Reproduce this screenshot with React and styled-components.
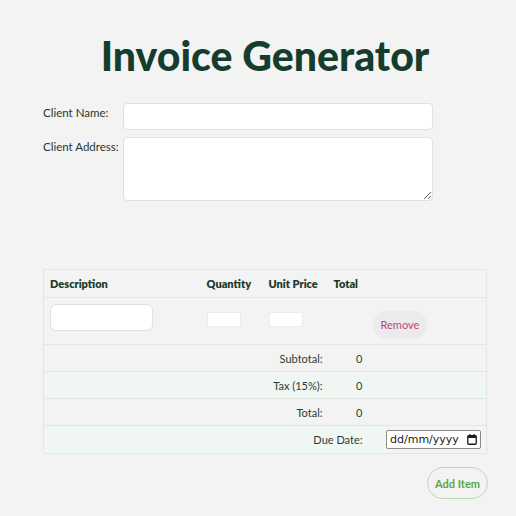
import styled, { createGlobalStyle } from "styled-components";

const GlobalStyle = createGlobalStyle`
  body {
    margin: 0;
    background-color: #f3f3f3;
    font-family: Lato, "Noto Sans", sans-serif;
    color: #24382e;
  }
`;

const Page = styled.div`
  width: 444px;
  margin-left: 43px;
  padding-top: 31px;
`;

const Title = styled.h1`
  margin: 0 0 23px;
  font-size: 41px;
  line-height: 1.2;
  font-weight: 900;
  color: #143d2e;
  text-align: center;
`;

const FormRow = styled.div`
  display: flex;
  align-items: flex-start;
  margin-bottom: 7px;
`;

const Label = styled.label`
  width: 80px;
  flex-shrink: 0;
  padding-top: 3px;
  font-size: 11.5px;
  line-height: 1.2;
  color: #24382e;
`;

const TextInput = styled.input`
  box-sizing: border-box;
  width: 310px;
  height: 27px;
  border: 1px solid #e0e0e0;
  border-radius: 4px;
  background: #fff;
  outline: none;
`;

const TextArea = styled.textarea`
  box-sizing: border-box;
  width: 310px;
  height: 64px;
  border: 1px solid #e0e0e0;
  border-radius: 4px;
  background: #fff;
  outline: none;
  resize: vertical;
`;

const Table = styled.table`
  width: 444px;
  margin-top: 68px;
  border-collapse: collapse;
  table-layout: fixed;
  border: 1px solid #e3e6e3;
`;

const Row = styled.tr`
  border-bottom: 1px solid #e3e6e3;
  background: ${(p) => (p.$tint ? "#f0f6f1" : "transparent")};
`;

const Head = styled.th`
  height: 27px;
  padding: 0 6px;
  font-size: 11px;
  font-weight: 800;
  text-align: left;
  color: #1f3a2d;
`;

const Cell = styled.td`
  height: ${(p) => p.$h || 26}px;
  padding: 0 ${(p) => p.$pr ?? 6}px 0 6px;
  font-size: 11px;
  text-align: ${(p) => p.$align || "left"};
  vertical-align: middle;
  color: #2c3e34;
`;

const DescInput = styled.input`
  display: block;
  box-sizing: border-box;
  width: 103px;
  height: 27px;
  margin-bottom: 7px;
  border: 1px solid #e0e0e0;
  border-radius: 6px;
  background: #fff;
  outline: none;
`;

const SmallInput = styled.input`
  display: block;
  box-sizing: border-box;
  width: 34px;
  height: 15px;
  margin-bottom: 3px;
  border: 1px solid #ececec;
  background: #fff;
  outline: none;
`;

const RemoveButton = styled.button`
  display: block;
  height: 28px;
  margin-top: 7px;
  padding: 0 8px;
  border: none;
  border-radius: 14px;
  background: #ebebeb;
  font-family: inherit;
  font-size: 11px;
  color: #c2457a;
  cursor: pointer;
`;

const DateBox = styled.div`
  display: inline-flex;
  align-items: center;
  justify-content: space-between;
  box-sizing: border-box;
  width: 95px;
  height: 19px;
  padding: 0 3px;
  border: 1px solid #8a8a8a;
  border-radius: 2px;
  background: #fff;
  font-family: "DejaVu Sans", sans-serif;
  font-size: 11px;
  color: #1a1a1a;
  text-align: left;
`;

const Actions = styled.div`
  display: flex;
  justify-content: flex-end;
  margin-top: 13px;
  margin-right: -1px;
`;

const AddButton = styled.button`
  height: 32px;
  padding: 0 7px;
  border: 1px solid #b8dbb0;
  border-radius: 16px;
  background: transparent;
  font-family: inherit;
  font-size: 11px;
  font-weight: 700;
  color: #5aa548;
  cursor: pointer;
`;

function CalendarIcon() {
  return (
    <svg width="10" height="11" viewBox="0 0 10 11">
      <rect x="0.75" y="1.75" width="8.5" height="8.5" rx="1" fill="none" stroke="#1a1a1a" strokeWidth="1.3" />
      <rect x="0.75" y="1.75" width="8.5" height="2.2" fill="#1a1a1a" />
      <rect x="2.4" y="0" width="1.2" height="2.4" fill="#1a1a1a" />
      <rect x="6.4" y="0" width="1.2" height="2.4" fill="#1a1a1a" />
    </svg>
  );
}

function SummaryRow({ label, value, tint }) {
  return (
    <Row $tint={tint}>
      <Cell colSpan={3} $align="right" $pr={5}>
        {label}
      </Cell>
      <Cell $align="right" $pr={4}>
        {value}
      </Cell>
      <Cell />
    </Row>
  );
}

export default function App() {
  return (
    <>
      <GlobalStyle />
      <Page>
        <Title>Invoice Generator</Title>
        <FormRow>
          <Label>Client Name:</Label>
          <TextInput type="text" />
        </FormRow>
        <FormRow>
          <Label>Client Address:</Label>
          <TextArea />
        </FormRow>

        <Table>
          <colgroup>
            <col style={{ width: 157 }} />
            <col style={{ width: 62 }} />
            <col style={{ width: 65 }} />
            <col style={{ width: 39 }} />
            <col />
          </colgroup>
          <thead>
            <Row>
              <Head>Description</Head>
              <Head>Quantity</Head>
              <Head>Unit Price</Head>
              <Head>Total</Head>
              <Head />
            </Row>
          </thead>
          <tbody>
            <Row>
              <Cell $h={46}>
                <DescInput type="text" />
              </Cell>
              <Cell $h={46}>
                <SmallInput type="number" />
              </Cell>
              <Cell $h={46}>
                <SmallInput type="number" />
              </Cell>
              <Cell $h={46} />
              <Cell $h={46}>
                <RemoveButton>Remove</RemoveButton>
              </Cell>
            </Row>
          </tbody>
          <tfoot>
            <SummaryRow label="Subtotal:" value="0" />
            <SummaryRow label="Tax (15%):" value="0" tint />
            <SummaryRow label="Total:" value="0" />
            <Row $tint>
              <Cell colSpan={4} $align="right" $pr={4} $h={27}>
                Due Date:
              </Cell>
              <Cell $align="right" $pr={5} $h={27}>
                <DateBox>
                  dd/mm/yyyy
                  <CalendarIcon />
                </DateBox>
              </Cell>
            </Row>
          </tfoot>
        </Table>

        <Actions>
          <AddButton>Add Item</AddButton>
        </Actions>
      </Page>
    </>
  );
}
